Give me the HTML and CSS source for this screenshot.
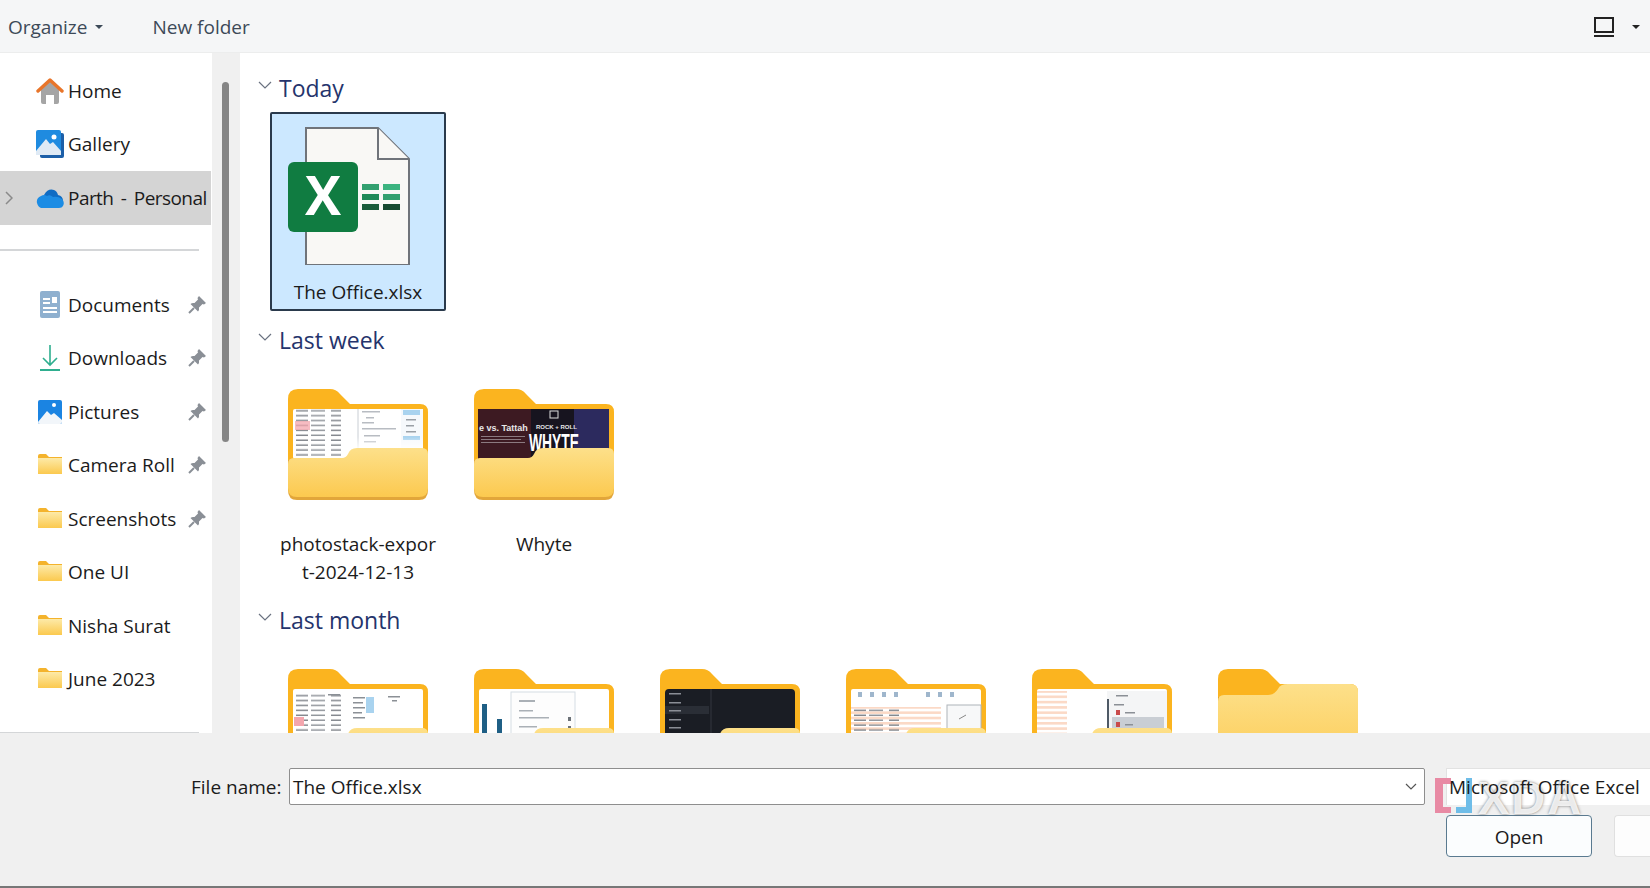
FILE: index.html
```html
<!DOCTYPE html>
<html lang="en">
<head>
  <meta charset="UTF-8">
  <title>Open</title>
  <link rel="stylesheet" href="styles.css">
</head>
<body>
  <svg class="defs" width="0" height="0">
    <defs>
      <linearGradient id="frontFill" x1="0" y1="0" x2="0" y2="1">
        <stop offset="0" stop-color="#fde08a"/>
        <stop offset="1" stop-color="#fcc94f"/>
      </linearGradient>
      <linearGradient id="smallFill" x1="0" y1="0" x2="0" y2="1">
        <stop offset="0" stop-color="#fdeaa8"/>
        <stop offset="1" stop-color="#fbc94e"/>
      </linearGradient>
      <linearGradient id="sheetFade" x1="0" y1="0" x2="0" y2="1">
        <stop offset="0" stop-color="#fff" stop-opacity="0"/>
        <stop offset="1" stop-color="#fff" stop-opacity="0.9"/>
      </linearGradient>
      <pattern id="sheetRows" width="130" height="4.9" patternUnits="userSpaceOnUse">
        <rect x="8" y="1.500" width="12" height="1.400" fill="#7d8288"/>
        <rect x="23" y="1.500" width="14" height="1.400" fill="#8b9096"/>
        <rect x="43" y="1.500" width="10" height="1.400" fill="#7d8288"/>
      </pattern>
      <pattern id="peachRows" width="130" height="5.3" patternUnits="userSpaceOnUse">
        <rect x="0" y="0" width="130" height="2.600" fill="#fbd9c6"/>
      </pattern>
      <symbol id="folderBack" viewBox="0 0 140 111">
        <path fill="#fbb41f" d="M0 10Q0 0 10 0H42Q48 0 52 5L62 15H132Q140 15 140 23V100H0Z"/>
      </symbol>
      <symbol id="folderFront" viewBox="0 0 140 111">
        <path fill="#e2a63a" d="M0 71H140V101Q140 111 131 111H9Q0 111 0 101Z"/>
        <path fill="url(#frontFill)" d="M0 75Q0 69 6 69H54Q58 69 60 65Q62 59 69 59H134Q140 59 140 65V99Q140 108 131 108H9Q0 108 0 99Z"/>
      </symbol>
      <symbol id="smallFolder" viewBox="0 0 24 20">
        <path fill="#f4b32c" d="M0 2Q0 0 2 0H8L11 3H24V8H0Z"/>
        <rect y="4" width="24" height="16" fill="url(#smallFill)"/>
      </symbol>
      <symbol id="pin" viewBox="0 0 18 18">
        <path fill="#8a8f96" d="M11 0L18 7L16 8.500L14.500 8L11 11.500Q11.500 14 10 15.500L2.500 8Q4 6.500 6.500 7L10 3.500L9.500 2Z"/>
        <path fill="none" stroke="#8a8f96" stroke-width="2" d="M6 12L1 17"/>
      </symbol>
    </defs>
  </svg>

  <div class="toolbar">
    <span class="tool">Organize<i class="caret"></i></span>
    <span class="tool new-folder">New folder</span>
    <span class="tool-right">
      <svg class="layout-icon" viewBox="0 0 20 20"><rect x="1" y="1" width="18" height="14" fill="none" stroke="#222" stroke-width="2"/><rect x="0" y="18" width="20" height="2" fill="#222"/></svg>
      <i class="caret dark"></i>
    </span>
  </div>

  <div class="middle">
    <nav class="nav-pane">
      <div class="nav-group top">
        <div class="nav-row">
          <svg class="nav-icon" viewBox="0 0 28 26"><path fill="#a5a5a5" d="M5 11L14 3L23 11V24Q23 26 21 26H18V17H10V26H7Q5 26 5 24Z"/><path fill="none" stroke="#e8752a" stroke-width="3.400" stroke-linecap="round" stroke-linejoin="round" d="M2 13L14 2L26 13"/></svg>
          <span>Home</span>
        </div>
        <div class="nav-row">
          <svg class="nav-icon" viewBox="0 0 28 28"><rect x="4" y="3" width="24" height="25" rx="2" fill="#1c5fa8"/><rect width="25" height="25" rx="2" fill="#1f8be0"/><path fill="#dfeaf5" d="M0 21L10 9L14 14L17 12L25 21V25H0Z"/><circle cx="18" cy="7" r="2.500" fill="#fff"/></svg>
          <span>Gallery</span>
        </div>
        <div class="nav-row current">
          <svg class="chevron" viewBox="0 0 8 14"><path fill="none" stroke="#8a8a8a" stroke-width="1.500" d="M1 1L7 7L1 13"/></svg>
          <svg class="nav-icon" viewBox="0 0 28 20"><path fill="#0f6cc4" d="M8 7Q12 0 18 2Q21 3 22 7Q27 8 27 13H10Z"/><path fill="#1c8ce4" d="M1 15Q0 10 5 8Q8 6 11 8Q14 6 17 9Q22 8 26 11Q29 14 27 18Q26 20 23 20H5Q2 19 1 15Z"/></svg>
          <span class="account-name">Parth - Personal</span>
        </div>
      </div>
      <div class="nav-group">
        <div class="nav-row">
          <svg class="nav-icon" viewBox="0 0 28 28"><rect x="4" width="20" height="27" rx="2" fill="#8fb0cf"/><g fill="#fff"><rect x="7" y="7" width="7" height="2"/><rect x="7" y="11" width="7" height="2"/><rect x="7" y="16" width="14" height="2"/><rect x="7" y="20" width="14" height="2"/><rect x="16" y="6" width="5" height="6"/></g></svg>
          <span class="nav-label">Documents</span>
          <svg class="pin"><use href="#pin"/></svg>
        </div>
        <div class="nav-row">
          <svg class="nav-icon" viewBox="0 0 28 28"><path fill="none" stroke="#2fae8f" stroke-width="1.600" d="M14 1V21M7 14L14 21L21 14"/><rect x="4" y="25" width="20" height="2" fill="#2fae8f"/></svg>
          <span class="nav-label">Downloads</span>
          <svg class="pin"><use href="#pin"/></svg>
        </div>
        <div class="nav-row">
          <svg class="nav-icon" viewBox="0 0 28 28"><rect x="2" y="2" width="24" height="24" rx="2" fill="#1b84e2"/><path fill="#f2f6fa" d="M2 24L11 13L15 17L18 15L26 22V24Q26 26 24 26H4Q2 26 2 24Z"/><circle cx="18" cy="7" r="2" fill="#fff"/></svg>
          <span class="nav-label">Pictures</span>
          <svg class="pin"><use href="#pin"/></svg>
        </div>
        <div class="nav-row">
          <svg class="nav-icon small"><use href="#smallFolder"/></svg>
          <span class="nav-label">Camera Roll</span>
          <svg class="pin"><use href="#pin"/></svg>
        </div>
        <div class="nav-row">
          <svg class="nav-icon small"><use href="#smallFolder"/></svg>
          <span class="nav-label">Screenshots</span>
          <svg class="pin"><use href="#pin"/></svg>
        </div>
        <div class="nav-row">
          <svg class="nav-icon small"><use href="#smallFolder"/></svg>
          <span class="nav-label">One UI</span>
        </div>
        <div class="nav-row">
          <svg class="nav-icon small"><use href="#smallFolder"/></svg>
          <span class="nav-label">Nisha Surat</span>
        </div>
        <div class="nav-row">
          <svg class="nav-icon small"><use href="#smallFolder"/></svg>
          <span class="nav-label">June 2023</span>
        </div>
      </div>
    </nav>

    <div class="scroll-track"><div class="scroll-thumb"></div></div>

    <main class="files">
      <div class="group-head"><svg class="group-chevron" viewBox="0 0 14 8"><path fill="none" stroke="#6a7280" stroke-width="1.200" d="M1 1L7 7L13 1"/></svg>Today</div>
      <div class="tile selected">
        <svg class="excel" viewBox="0 0 140 138">
          <path fill="#f9f8f5" stroke="#70747a" stroke-width="2" d="M18 1H90L121 32V138H18Z"/>
          <path fill="#f9f8f5" stroke="#70747a" stroke-width="2" d="M90 1V32H121"/>
          <rect y="35" width="70" height="70" rx="6" fill="#107c41"/>
          <text class="excel-x" x="35" y="88" text-anchor="middle">X</text>
          <rect x="74" y="57" width="17" height="6" fill="#33a06f"/>
          <rect x="95" y="57" width="17" height="6" fill="#3cb37f"/>
          <rect x="74" y="67" width="17" height="6" fill="#1f8a58"/>
          <rect x="95" y="67" width="17" height="6" fill="#33a06f"/>
          <rect x="74" y="77" width="17" height="6" fill="#1a5c3a"/>
          <rect x="95" y="77" width="17" height="6" fill="#164a30"/>
        </svg>
        <div class="tile-name">The Office.xlsx</div>
      </div>

      <div class="group-head"><svg class="group-chevron" viewBox="0 0 14 8"><path fill="none" stroke="#6a7280" stroke-width="1.200" d="M1 1L7 7L13 1"/></svg>Last week</div>
      <div class="tile-row">
        <div class="tile">
          <svg class="folder" viewBox="0 0 140 111">
            <use href="#folderBack" width="140" height="111"/>
            <rect x="5" y="20" width="130" height="50" rx="2" fill="#fff"/>
            <rect x="5" y="20" width="62" height="49" fill="url(#sheetRows)"/>
            <rect x="7" y="32" width="15" height="9" fill="#f4a6ae" fill-opacity="0.75"/>
            <path stroke="#c9ced4" d="M70 20V70"/>
            <g fill="#b8bcc2"><rect x="74" y="22" width="18" height="1.500"/><rect x="78" y="28" width="8" height="1.500"/><rect x="74" y="33" width="12" height="1.500"/><rect x="74" y="39" width="34" height="1.500"/><rect x="76" y="46" width="16" height="1.500"/><rect x="76" y="52" width="12" height="1.500"/></g>
            <rect x="113" y="20" width="22" height="50" fill="#f6f9fc"/>
            <g fill="#a9d3ef"><rect x="115" y="21" width="17" height="5"/><rect x="115" y="47" width="17" height="4"/></g>
            <g fill="#9aa0a6"><rect x="118" y="30" width="10" height="1.500"/><rect x="118" y="36" width="8" height="1.500"/><rect x="118" y="42" width="10" height="1.500"/></g>
            <rect x="60" y="48" width="75" height="12" fill="url(#sheetFade)"/>
            <use href="#folderFront" width="140" height="111"/>
          </svg>
          <div class="tile-name">photostack-expor<br>t-2024-12-13</div>
        </div>
        <div class="tile">
          <svg class="folder" viewBox="0 0 140 111">
            <use href="#folderBack" width="140" height="111"/>
            <rect x="4" y="20" width="131" height="50" rx="4" fill="#17141f"/>
            <rect x="4" y="20" width="53" height="50" fill="#3d1a22"/>
            <rect x="100" y="20" width="35" height="50" fill="#2c2a5e"/>
            <rect x="76" y="22" width="8" height="7" fill="none" stroke="#ddd"/>
            <text class="poster small" x="5" y="42">e vs. Tattah</text>
            <g fill="#8b7a80"><rect x="7" y="47" width="44" height="1"/><rect x="7" y="50" width="40" height="1"/><rect x="7" y="53" width="44" height="1"/></g>
            <text class="poster tiny" x="62" y="40">ROCK + ROLL</text>
            <text class="poster big" x="55" y="62" textLength="50" lengthAdjust="spacingAndGlyphs">WHYTE</text>
            <use href="#folderFront" width="140" height="111"/>
          </svg>
          <div class="tile-name">Whyte</div>
        </div>
      </div>

      <div class="group-head"><svg class="group-chevron" viewBox="0 0 14 8"><path fill="none" stroke="#6a7280" stroke-width="1.200" d="M1 1L7 7L13 1"/></svg>Last month</div>
      <div class="tile-row">
        <div class="tile">
          <svg class="folder" viewBox="0 0 140 111">
            <use href="#folderBack" width="140" height="111"/>
            <rect x="5" y="20" width="130" height="50" rx="2" fill="#fff"/>
            <rect x="5" y="25" width="48" height="45" fill="url(#sheetRows)"/>
            <rect x="6" y="48" width="10" height="9" fill="#f4a6ae"/>
            <g fill="#8b9096"><rect x="40" y="25" width="12" height="1.500"/><rect x="65" y="28" width="12" height="1.500"/><rect x="65" y="33" width="10" height="1.500"/><rect x="65" y="38" width="12" height="1.500"/><rect x="65" y="43" width="9" height="1.500"/><rect x="65" y="48" width="12" height="1.500"/><rect x="100" y="27" width="12" height="1.500"/><rect x="104" y="31" width="5" height="1.500"/></g>
            <g fill="#a9d3ef"><rect x="78" y="28" width="8" height="16"/><rect x="78" y="62" width="8" height="5"/></g>
            <use href="#folderFront" width="140" height="111"/>
          </svg>
        </div>
        <div class="tile">
          <svg class="folder" viewBox="0 0 140 111">
            <use href="#folderBack" width="140" height="111"/>
            <rect x="5" y="20" width="130" height="50" rx="2" fill="#fff"/>
            <rect x="8" y="35" width="5" height="35" fill="#1f5f85"/>
            <rect x="23" y="50" width="5" height="20" fill="#1f5f85"/>
            <rect x="37" y="23" width="64" height="47" fill="#fdfdfd" stroke="#d5dde4"/>
            <g fill="#aab0b6"><rect x="45" y="31" width="16" height="2"/><rect x="45" y="41" width="14" height="1.500"/><rect x="45" y="48" width="30" height="1.500"/><rect x="45" y="57" width="18" height="1.500"/></g>
            <g fill="#6c7278"><rect x="94" y="48" width="3" height="4"/><rect x="94" y="57" width="3" height="4"/></g>
            <use href="#folderFront" width="140" height="111"/>
          </svg>
        </div>
        <div class="tile">
          <svg class="folder" viewBox="0 0 140 111">
            <use href="#folderBack" width="140" height="111"/>
            <rect x="5" y="20" width="130" height="50" rx="4" fill="#1a1d24"/>
            <rect x="5" y="37" width="44" height="8" fill="#2a2e36"/>
            <path stroke="#33373f" d="M51 20V70"/>
            <g fill="#8a8e96"><rect x="9" y="24" width="12" height="1.500"/><rect x="9" y="33" width="12" height="1.500"/><rect x="9" y="41" width="12" height="1.500"/><rect x="9" y="50" width="12" height="1.500"/><rect x="9" y="58" width="12" height="1.500"/><rect x="9" y="66" width="12" height="1.500"/></g>
            <use href="#folderFront" width="140" height="111"/>
          </svg>
        </div>
        <div class="tile">
          <svg class="folder" viewBox="0 0 140 111">
            <use href="#folderBack" width="140" height="111"/>
            <rect x="5" y="20" width="130" height="50" rx="2" fill="#fff"/>
            <g fill="#9fb6cc"><rect x="12" y="23" width="4" height="5"/><rect x="24" y="23" width="4" height="5"/><rect x="36" y="23" width="4" height="5"/><rect x="48" y="23" width="4" height="5"/><rect x="80" y="23" width="4" height="5"/><rect x="92" y="23" width="4" height="5"/><rect x="104" y="23" width="4" height="5"/></g>
            <rect x="5" y="38" width="90" height="32" fill="url(#peachRows)"/>
            <rect x="5" y="38" width="58" height="32" fill="url(#sheetRows)"/>
            <rect x="101" y="36" width="34" height="34" fill="#f7f8f9" stroke="#aeb4ba"/>
            <path fill="none" stroke="#888" d="M113 50L120 46"/>
            <use href="#folderFront" width="140" height="111"/>
          </svg>
        </div>
        <div class="tile">
          <svg class="folder" viewBox="0 0 140 111">
            <use href="#folderBack" width="140" height="111"/>
            <rect x="5" y="20" width="130" height="50" rx="2" fill="#fff"/>
            <rect x="5" y="22" width="30" height="48" fill="url(#peachRows)"/>
            <rect x="75" y="22" width="60" height="48" fill="#f4f5f6"/>
            <rect x="75" y="30" width="2" height="40" fill="#4f5a66"/>
            <rect x="80" y="48" width="52" height="14" fill="#c9ced4"/>
            <g fill="#c94b4b"><rect x="84" y="41" width="4" height="5"/><rect x="84" y="53" width="4" height="5"/></g>
            <g fill="#8b9096"><rect x="84" y="26" width="12" height="1.500"/><rect x="82" y="35" width="10" height="1.500"/><rect x="93" y="43" width="10" height="1.500"/><rect x="93" y="55" width="8" height="1.500"/></g>
            <use href="#folderFront" width="140" height="111"/>
          </svg>
        </div>
        <div class="tile">
          <svg class="folder" viewBox="0 0 140 111">
            <use href="#folderBack" width="140" height="111"/>
            <path fill="#e2a021" d="M0 28H52Q60 28 66 24V34H0Z"/>
            <path fill="url(#frontFill)" d="M0 32Q0 26 6 26H50Q56 26 60 20Q62 15 70 15H132Q140 15 140 23V99Q140 108 131 108H9Q0 108 0 99Z"/>
          </svg>
        </div>
      </div>
    </main>
  </div>

  <div class="footer">
    <div class="name-row">
      <label class="name-label">File name:</label>
      <div class="name-input">The Office.xlsx<svg class="combo-arrow" viewBox="0 0 12 7"><path fill="none" stroke="#555" stroke-width="1.200" d="M1 1L6 6L11 1"/></svg></div>
      <div class="filter-box"><span class="filter-text">Microsoft Office Excel</span></div>
    </div>
    <div class="button-row">
      <button class="btn primary">Open</button>
      <button class="btn cut"></button>
    </div>
    <div class="watermark">
      <i class="mark-bracket pink"></i><i class="mark-bracket blue"></i>
      <span class="mark-text">XDA</span>
    </div>
  </div>
</body>
</html>
```

FILE: styles.css
```css
* {
  box-sizing: border-box;
  margin: 0;
  padding: 0;
}

html, body {
  height: 888px;
  overflow: hidden;
}

body {
  font-family: "Open Sans", "Noto Sans", Arial, sans-serif;
  font-size: 19px;
  color: #1b1b1b;
  background: #fff;
  display: flex;
  flex-direction: column;
}

.defs {
  position: absolute;
}

/* Top toolbar */
.toolbar {
  height: 53px;
  flex: none;
  display: flex;
  align-items: center;
  background: #f5f6f7;
  border-bottom: 1px solid #eceded;
  color: #3d4a58;
  padding: 2px 0 0 8px;
}

.tool {
  display: flex;
  align-items: center;
}

.new-folder {
  margin-left: 49px;
}

.caret {
  display: inline-block;
  width: 0;
  height: 0;
  margin-left: 8px;
  border-left: 4px solid transparent;
  border-right: 4px solid transparent;
  border-top: 4px solid #3d4a58;
}

.caret.dark {
  margin-left: 18px;
  border-top-color: #222;
}

.tool-right {
  margin-left: auto;
  margin-right: 10px;
  display: flex;
  align-items: center;
}

.layout-icon {
  width: 20px;
  height: 20px;
}

/* Middle part */
.middle {
  height: 680px;
  flex: none;
  display: flex;
  overflow: hidden;
}

.nav-pane {
  width: 212px;
  flex: none;
  background: #fff;
}

.nav-group {
  width: 199px;
  height: 456px;
  border-bottom: 2px solid #d4d6d8;
}

.nav-group.top {
  height: 198px;
  padding-top: 11px;
  margin-bottom: 27px;
}

.nav-row {
  position: relative;
  width: 211px;
  height: 53.5px;
  display: flex;
  align-items: center;
  padding-left: 36px;
}

.nav-row.current {
  background: #d4d4d4;
}

.account-name {
  white-space: nowrap;
  letter-spacing: -0.55px;
  word-spacing: 3px;
}

.chevron {
  position: absolute;
  left: 5px;
  top: 20px;
  width: 8px;
  height: 14px;
}

.nav-icon {
  width: 28px;
  height: 28px;
  margin-right: 4px;
  flex: none;
}

.nav-icon.small {
  width: 24px;
  height: 20px;
  margin: -2px 6px 0 2px;
}

.nav-label {
  flex: 1;
}

.pin {
  width: 18px;
  height: 18px;
  margin-right: 5px;
  flex: none;
}

.scroll-track {
  width: 28px;
  flex: none;
  background: #f0f0f0;
  padding: 29px 0 0 10px;
}

.scroll-thumb {
  width: 7px;
  height: 360px;
  border-radius: 4px;
  background: #858585;
}

/* File list */
.files {
  flex: 1;
  background: #fff;
  padding: 19px 0 0 30px;
  overflow: hidden;
}

.group-head {
  height: 32px;
  margin-bottom: 8px;
  display: flex;
  align-items: center;
  font-size: 23px;
  color: #25346c;
}

.group-chevron {
  width: 14px;
  height: 8px;
  margin: -6px 7px 0 -12px;
  flex: none;
}

.tile-row {
  display: flex;
  gap: 10px;
}

.tile {
  width: 176px;
  flex: none;
  padding: 25px 0 4px;
  text-align: center;
  line-height: 28px;
  margin-bottom: 14px;
}

.tile.selected {
  height: 199px;
  padding: 13px 0 0;
  margin-bottom: 13px;
  background: #cce8ff;
  border: 2px solid #2a3a4c;
  border-radius: 2px;
}

.excel {
  display: block;
  width: 140px;
  height: 138px;
  margin-left: 16px;
}

.excel-x {
  font-family: "Open Sans", Arial, sans-serif;
  font-weight: 700;
  font-size: 54px;
  fill: #fff;
}

.selected .tile-name {
  margin-top: 13px;
}

.folder {
  display: block;
  width: 140px;
  height: 111px;
  margin: 0 auto 30px;
}

.poster {
  font-family: "Liberation Sans", Arial, sans-serif;
  fill: #e8e8e8;
}

.poster.small {
  font-size: 9px;
  font-weight: 700;
}

.poster.tiny {
  font-size: 6px;
  font-weight: 700;
}

.poster.big {
  font-size: 24px;
  font-weight: 700;
  fill: #fff;
}

/* Bottom panel */
.footer {
  position: relative;
  flex: 1;
  background: #f0f0f0;
  border-bottom: 2px solid #777;
  padding-top: 35px;
}

.name-row {
  display: flex;
  align-items: center;
}

.name-label {
  width: 283px;
  padding: 1px 0 0 191px;
}

.name-input {
  position: relative;
  margin-left: 6px;
  width: 1136px;
  height: 37px;
  padding-left: 3px;
  line-height: 36px;
  background: #fff;
  border: 1px solid #8e8e8e;
  border-radius: 2px;
}

.combo-arrow {
  position: absolute;
  right: 7px;
  top: 14px;
  width: 12px;
  height: 7px;
}

.filter-box {
  margin-left: 21px;
  flex: 1;
  min-width: 0;
  height: 37px;
  padding-left: 2px;
  line-height: 36px;
  white-space: nowrap;
  background: #fff;
  border-left: 1px solid #e2e2e2;
  border-top: 1px solid #e2e2e2;
}

.filter-text {
  position: relative;
  z-index: 2;
}

.button-row {
  display: flex;
  gap: 22px;
  margin-top: 10px;
  padding-left: 1446px;
}

.btn {
  width: 146px;
  height: 42px;
  flex: none;
  font: inherit;
  color: inherit;
  padding-top: 1px;
  background: #fdfdfd;
  border: 1px solid #e0e0e0;
  border-radius: 4px;
}

.btn.cut {
  flex: 1;
  width: auto;
  min-width: 0;
  border-right: 0;
  border-radius: 4px 0 0 4px;
}

.btn.primary {
  background: #fbfdfe;
  border: 1.5px solid #5a7a90;
}

/* Site watermark lying over the dialog */
.watermark {
  position: absolute;
  z-index: 1;
  left: 1435px;
  top: 45px;
  width: 155px;
  height: 40px;
}

.mark-bracket {
  position: absolute;
  top: 0;
  width: 16px;
  height: 35px;
  border: 6px solid;
}

.mark-bracket.pink {
  left: 0;
  border-color: #e88aa4;
  border-left-width: 8px;
  border-right: 0;
}

.mark-bracket.blue {
  left: 21px;
  border-color: #6fbde8;
  border-left: 0;
  border-top: 0;
}

.mark-text {
  position: absolute;
  left: 43px;
  top: -8px;
  font-family: "Liberation Sans", Arial, sans-serif;
  font-size: 47px;
  font-weight: 700;
  letter-spacing: 2px;
  color: rgba(255, 255, 255, 0.85);
  text-shadow: 0 0 3px rgba(90, 90, 90, 0.8);
}
```
